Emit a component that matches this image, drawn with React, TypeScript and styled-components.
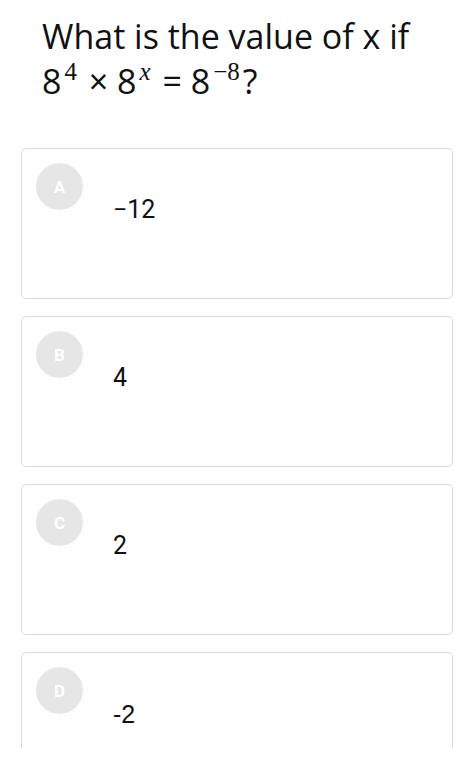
import styled, { createGlobalStyle } from 'styled-components';

const GlobalStyle = createGlobalStyle`
  html, body {
    margin: 0;
    padding: 0;
    background: #ffffff;
  }
`;

const Page = styled.div`
  width: 474px;
  height: 748px;
  overflow: hidden;
  background: #ffffff;
  padding: 0 21px;
  box-sizing: border-box;
`;

const Question = styled.h1`
  margin: 0;
  padding: 14px 0 0 21px;
  height: 102px;
  font-family: "Open Sans", "Noto Sans", sans-serif;
  font-weight: 400;
  font-size: 34px;
  line-height: 45px;
  color: #111111;
`;

const Sup = styled.span`
  font-family: "Liberation Serif", "DejaVu Serif", serif;
  font-size: 25px;
  line-height: 0;
  vertical-align: 14px;
  margin: 0 3px 0 3px;
`;

const MathVar = styled.i`
  font-family: "Liberation Serif", serif;
`;

const OptionList = styled.div`
  display: flex;
  flex-direction: column;
  gap: 17px;
  margin-top: 32px;
`;

const Card = styled.div`
  height: 151px;
  box-sizing: border-box;
  border: 1.5px solid #d9d9d9;
  border-radius: 5px;
  display: flex;
  align-items: flex-start;
  padding: 14px 0 0 14px;
`;

const Badge = styled.div`
  width: 47px;
  height: 47px;
  border-radius: 50%;
  background: #e6e6e6;
  color: #ffffff;
  font-family: Roboto, "Liberation Sans", sans-serif;
  font-weight: 700;
  font-size: 17px;
  display: flex;
  align-items: center;
  justify-content: center;
  flex-shrink: 0;
`;

const Answer = styled.div<{ $plain?: boolean }>`
  margin: 32px 0 0 30px;
  font-family: ${p => (p.$plain ? '"Liberation Sans", Arial' : 'Roboto, "Liberation Sans"')}, sans-serif;
  font-size: 25px;
  line-height: 30px;
  color: #111111;
`;

const options = [
  { letter: 'A', text: '\u221212' },
  { letter: 'B', text: '4' },
  { letter: 'C', text: '2' },
  { letter: 'D', text: '-2', plain: true },
];

export default function App() {
  return (
    <>
      <GlobalStyle />
      <Page>
        <Question>
          What is the value of x if
          <br />
          8<Sup>4</Sup> × 8<Sup><MathVar>x</MathVar></Sup> = 8<Sup>−8</Sup>?
        </Question>
        <OptionList>
          {options.map(o => (
            <Card key={o.letter}>
              <Badge>{o.letter}</Badge>
              <Answer $plain={o.plain}>{o.text}</Answer>
            </Card>
          ))}
        </OptionList>
      </Page>
    </>
  );
}
